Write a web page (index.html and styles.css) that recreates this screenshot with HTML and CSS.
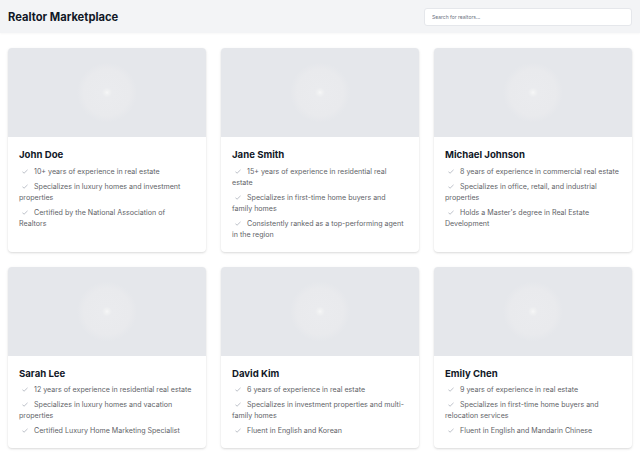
FILE: index.html
```html
<!DOCTYPE html>
<html lang="en">
<head>
  <meta charset="UTF-8">
  <meta name="viewport" content="width=device-width, initial-scale=1.0">
  <title>Realtor Marketplace</title>
  <link rel="stylesheet" href="styles.css">
</head>
<body>
  <header class="topbar">
    <h1 class="title">Realtor Marketplace</h1>
    <input class="search" type="text" placeholder="Search for realtors...">
  </header>

  <main class="grid">
    <div class="card">
      <div class="photo"></div>
      <div class="card-body">
        <h2 class="name">John Doe</h2>
        <ul class="facts">
          <li><svg class="check" viewBox="0 0 8 6"><path d="M0.6 3.4 L2.8 5.2 L7.4 0.8"/></svg>10+ years of experience in real estate</li>
          <li><svg class="check" viewBox="0 0 8 6"><path d="M0.6 3.4 L2.8 5.2 L7.4 0.8"/></svg>Specializes in luxury homes and investment properties</li>
          <li><svg class="check" viewBox="0 0 8 6"><path d="M0.6 3.4 L2.8 5.2 L7.4 0.8"/></svg>Certified by the National Association of Realtors</li>
        </ul>
      </div>
    </div>

    <div class="card">
      <div class="photo"></div>
      <div class="card-body">
        <h2 class="name">Jane Smith</h2>
        <ul class="facts">
          <li><svg class="check" viewBox="0 0 8 6"><path d="M0.6 3.4 L2.8 5.2 L7.4 0.8"/></svg>15+ years of experience in residential real estate</li>
          <li><svg class="check" viewBox="0 0 8 6"><path d="M0.6 3.4 L2.8 5.2 L7.4 0.8"/></svg>Specializes in first-time home buyers and family homes</li>
          <li><svg class="check" viewBox="0 0 8 6"><path d="M0.6 3.4 L2.8 5.2 L7.4 0.8"/></svg>Consistently ranked as a top-performing agent in the region</li>
        </ul>
      </div>
    </div>

    <div class="card">
      <div class="photo"></div>
      <div class="card-body">
        <h2 class="name">Michael Johnson</h2>
        <ul class="facts">
          <li><svg class="check" viewBox="0 0 8 6"><path d="M0.6 3.4 L2.8 5.2 L7.4 0.8"/></svg>8 years of experience in commercial real estate</li>
          <li><svg class="check" viewBox="0 0 8 6"><path d="M0.6 3.4 L2.8 5.2 L7.4 0.8"/></svg>Specializes in office, retail, and industrial properties</li>
          <li><svg class="check" viewBox="0 0 8 6"><path d="M0.6 3.4 L2.8 5.2 L7.4 0.8"/></svg>Holds a Master's degree in Real Estate Development</li>
        </ul>
      </div>
    </div>

    <div class="card">
      <div class="photo"></div>
      <div class="card-body">
        <h2 class="name">Sarah Lee</h2>
        <ul class="facts">
          <li><svg class="check" viewBox="0 0 8 6"><path d="M0.6 3.4 L2.8 5.2 L7.4 0.8"/></svg>12 years of experience in residential real estate</li>
          <li><svg class="check" viewBox="0 0 8 6"><path d="M0.6 3.4 L2.8 5.2 L7.4 0.8"/></svg>Specializes in luxury homes and vacation properties</li>
          <li><svg class="check" viewBox="0 0 8 6"><path d="M0.6 3.4 L2.8 5.2 L7.4 0.8"/></svg>Certified Luxury Home Marketing Specialist</li>
        </ul>
      </div>
    </div>

    <div class="card">
      <div class="photo"></div>
      <div class="card-body">
        <h2 class="name">David Kim</h2>
        <ul class="facts">
          <li><svg class="check" viewBox="0 0 8 6"><path d="M0.6 3.4 L2.8 5.2 L7.4 0.8"/></svg>6 years of experience in real estate</li>
          <li><svg class="check" viewBox="0 0 8 6"><path d="M0.6 3.4 L2.8 5.2 L7.4 0.8"/></svg>Specializes in investment properties and multi-family homes</li>
          <li><svg class="check" viewBox="0 0 8 6"><path d="M0.6 3.4 L2.8 5.2 L7.4 0.8"/></svg>Fluent in English and Korean</li>
        </ul>
      </div>
    </div>

    <div class="card">
      <div class="photo"></div>
      <div class="card-body">
        <h2 class="name">Emily Chen</h2>
        <ul class="facts">
          <li><svg class="check" viewBox="0 0 8 6"><path d="M0.6 3.4 L2.8 5.2 L7.4 0.8"/></svg>9 years of experience in real estate</li>
          <li><svg class="check" viewBox="0 0 8 6"><path d="M0.6 3.4 L2.8 5.2 L7.4 0.8"/></svg>Specializes in first-time home buyers and relocation services</li>
          <li><svg class="check" viewBox="0 0 8 6"><path d="M0.6 3.4 L2.8 5.2 L7.4 0.8"/></svg>Fluent in English and Mandarin Chinese</li>
        </ul>
      </div>
    </div>
  </main>
</body>
</html>
```

FILE: styles.css
```css
body {
  margin: 0;
  font-family: Inter, "Noto Sans", sans-serif;
  background-color: #ffffff;
  color: #111827;
}
.topbar {
  display: flex;
  align-items: center;
  justify-content: space-between;
  height: 33px;
  padding: 0 8px;
  background-color: #f3f4f6; /* light grey bar */
  box-shadow: 0 1px 2px rgba(0, 0, 0, 0.03);
}
.title {
  margin: 0;
  font-size: 11.2px;
  font-weight: 700;
  color: #111827;
}
.search {
  width: 208px;
  height: 18px;
  box-sizing: border-box;
  padding: 0 7px;
  border: 1px solid #e5e7eb;
  border-radius: 3px;
  background: #fff;
  font-family: inherit;
  font-size: 5px;
  outline: none;
}
.search::placeholder {
  color: #6b7280;
}
.grid {
  display: grid;
  grid-template-columns: repeat(3, 1fr);
  gap: 15px;
  padding: 15px 8px;
}
.card {
  background: #fff;
  border-radius: 4px;
  overflow: hidden;
  box-shadow: 0 1px 3px rgba(0, 0, 0, 0.1), 0 1px 2px rgba(0, 0, 0, 0.06);
}
.photo {
  height: 89px;
  background-color: #e5e7eb;
  background-image:
    radial-gradient(circle at center, #f7f7f8 0, #f0f1f2 2px, #eaebee 5px, #e9eaed 23px, rgba(229, 231, 235, 0) 30px);
}
.card-body {
  padding: 11px 12.3px 12px 11px;
}
.name {
  margin: 0 0 3.5px;
  font-size: 9.6px;
  line-height: 14px;
  font-weight: 700;
  color: #111827;
}
.facts {
  list-style: none;
  margin: 0;
  padding: 0;
}
.facts li {
  font-size: 7.1px;
  line-height: 11px;
  color: #616368;
  margin-bottom: 4px;
}
.facts li:last-child {
  margin-bottom: 0;
}
.check {
  width: 6px;
  height: 5px;
  margin: 0 6px 0 3px;
  vertical-align: 0;
  fill: none;
  stroke: #9ca3af;
  stroke-width: 0.9;
}
```
